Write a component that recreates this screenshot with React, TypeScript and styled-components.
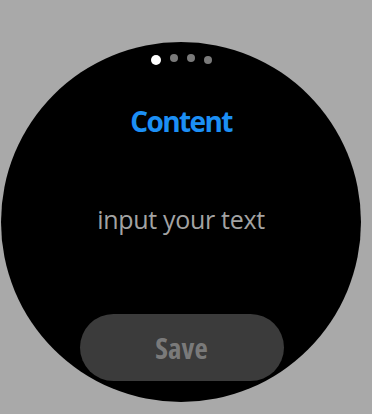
import React from "react";
import styled, { createGlobalStyle } from "styled-components";

const Global = createGlobalStyle`
  html, body {
    margin: 0;
    padding: 0;
    background: #a9a9a9;
  }
  body {
    font-family: "Open Sans", "Noto Sans", sans-serif;
  }
`;

const Page = styled.div`
  width: 372px;
  height: 414px;
  padding: 42px 0 0 1px;
  box-sizing: border-box;
`;

const Watch = styled.div`
  width: 360px;
  height: 360px;
  border-radius: 50%;
  background: #000;
  overflow: hidden;
  display: flex;
  flex-direction: column;
  align-items: center;
`;

const Indicator = styled.div`
  display: flex;
  align-items: flex-start;
  gap: 9px;
  margin-top: 12px;
  margin-left: 1px;
  height: 12px;
`;

const Dot = styled.span<{ $active?: boolean; $drop: number }>`
  display: block;
  width: ${(p) => (p.$active ? 10 : 8)}px;
  height: ${(p) => (p.$active ? 10 : 8)}px;
  border-radius: 50%;
  margin-top: ${(p) => p.$drop}px;
  background: ${(p) => (p.$active ? "#ffffff" : "#7a7a7a")};
`;

const Title = styled.h1`
  margin: 41px 0 0 0;
  font-family: "Open Sans", "Noto Sans", sans-serif;
  font-size: 28px;
  line-height: 29px;
  font-weight: 700;
  font-stretch: 100%;
  letter-spacing: -1.6px;
  color: #1c8ff5;
`;

const Body = styled.p`
  margin: 71px 0 0 0;
  font-size: 25px;
  line-height: 25px;
  font-weight: 400;
  letter-spacing: -0.3px;
  color: #a3a3a3;
`;

const SaveButton = styled.button`
  margin-top: 82px;
  width: 204px;
  height: 67px;
  border: none;
  border-radius: 34px;
  background: #3b3b3b;
  color: #7a7a7a;
  font-family: "Open Sans", "Noto Sans", sans-serif;
  font-size: 29px;
  font-weight: 700;
  font-stretch: 75%;
  padding: 0;
  margin-left: 1px;
`;

export default function App() {
  const dots = [
    { active: true, drop: 1 },
    { active: false, drop: 0 },
    { active: false, drop: 0 },
    { active: false, drop: 2 },
  ];
  return (
    <>
      <Global />
      <Page>
        <Watch>
          <Indicator>
            {dots.map((d, i) => (
              <Dot key={i} $active={d.active} $drop={d.drop} />
            ))}
          </Indicator>
          <Title>Content</Title>
          <Body>input your text</Body>
          <SaveButton>Save</SaveButton>
        </Watch>
      </Page>
    </>
  );
}
